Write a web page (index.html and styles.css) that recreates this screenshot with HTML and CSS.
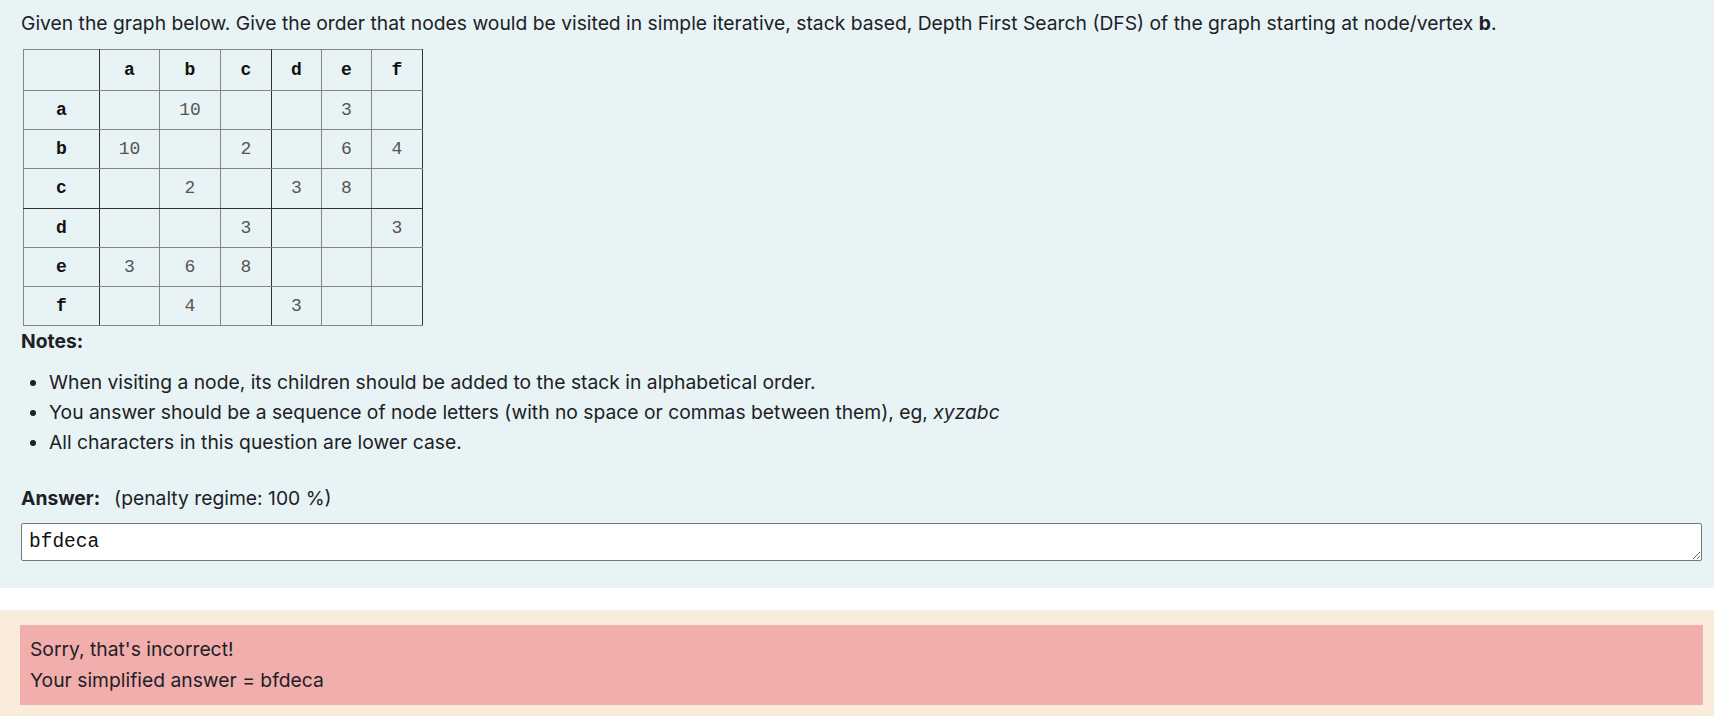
FILE: index.html
```html
<!DOCTYPE html>
<html lang="en">
<head>
    <meta charset="UTF-8">
    <title>DFS question</title>
    <link rel="stylesheet" href="styles.css">
</head>
<body>
    <div class="formulation">
        <p class="qtext">Given the graph below. Give the order that nodes would be visited in simple iterative, stack based, Depth First Search (DFS) of the graph starting at node/vertex <b>b</b>.</p>

        <table class="matrix">
            <colgroup>
                <col class="c-head">
                <col class="c-a">
                <col class="c-b">
                <col class="c-c">
                <col class="c-d">
                <col class="c-e">
                <col class="c-f">
            </colgroup>
            <tr class="top">
                <th class="sep"></th>
                <th>a</th><th>b</th><th class="sep">c</th><th>d</th><th>e</th><th class="sep">f</th>
            </tr>
            <tr>
                <th class="sep">a</th>
                <td></td><td>10</td><td class="sep"></td><td></td><td>3</td><td class="sep"></td>
            </tr>
            <tr>
                <th class="sep">b</th>
                <td>10</td><td></td><td class="sep">2</td><td></td><td>6</td><td class="sep">4</td>
            </tr>
            <tr class="block-end">
                <th class="sep">c</th>
                <td></td><td>2</td><td class="sep"></td><td>3</td><td>8</td><td class="sep"></td>
            </tr>
            <tr>
                <th class="sep">d</th>
                <td></td><td></td><td class="sep">3</td><td></td><td></td><td class="sep">3</td>
            </tr>
            <tr>
                <th class="sep">e</th>
                <td>3</td><td>6</td><td class="sep">8</td><td></td><td></td><td class="sep"></td>
            </tr>
            <tr>
                <th class="sep">f</th>
                <td></td><td>4</td><td class="sep"></td><td>3</td><td></td><td class="sep"></td>
            </tr>
        </table>

        <div class="notes-title">Notes:</div>
        <ul class="notes">
            <li>When visiting a node, its children should be added to the stack in alphabetical order.</li>
            <li>You answer should be a sequence of node letters (with no space or commas between them), eg, <i>xyzabc</i></li>
            <li>All characters in this question are lower case.</li>
        </ul>

        <div class="answer-label"><b>Answer:</b><span class="penalty">(penalty regime: 100 %)</span></div>
        <textarea class="answer" rows="1" spellcheck="false">bfdeca</textarea>
    </div>

    <div class="outcome">
        <div class="feedback">
            <div>Sorry, that's incorrect!</div>
            <div>Your simplified answer = bfdeca</div>
        </div>
    </div>
</body>
</html>
```

FILE: styles.css
```css
body {
    margin: 0;
    font-family: Inter, "Noto Sans", sans-serif;
    font-size: 19.3px;
    line-height: 30px;
    color: #1d2125;
    background-color: #fff;
}
.formulation {
    background-color: #e7f3f5;
    padding: 8px 12px 27px 21px;
}
.qtext {
    margin: 0 0 11px 0;
}
.matrix {
    border-collapse: collapse;
    table-layout: fixed;
    margin-left: 2px;
    font-family: "Liberation Mono", "Courier New", monospace;
    font-size: 18px;
}
.c-head { width: 76px; }
.c-a { width: 60px; }
.c-b { width: 61px; }
.c-c { width: 51px; }
.c-d { width: 50px; }
.c-e { width: 50px; }
.c-f { width: 51px; }
.matrix tr {
    height: 39.2px;
}
.matrix tr.top {
    height: 41px;
}
.matrix th,
.matrix td {
    border: 1px solid #858585;
    padding: 0;
    text-align: center;
    line-height: 20px;
}
.matrix th {
    font-weight: bold;
    color: #111;
}
.matrix td {
    color: #555;
}
.matrix .sep {
    border-right: 1px solid #333;
}
.matrix tr.block-end th,
.matrix tr.block-end td {
    border-bottom: 1px solid #333;
}
.notes-title {
    font-weight: bold;
}
.notes {
    margin: 11px 0 0 0;
    padding-left: 28px;
}
.answer-label {
    margin-top: 26px;
}
.penalty {
    margin-left: 14px;
}
.answer {
    display: block;
    box-sizing: border-box;
    width: 100%;
    height: 38px;
    margin-top: 10px;
    padding: 5px 7px;
    border: 1px solid #767676;
    border-radius: 2px;
    background-color: #fff;
    font-family: "Liberation Mono", "Courier New", monospace;
    font-size: 19.5px;
    line-height: 26px;
    color: #111;
}
.outcome {
    margin-top: 22px;
    background-color: #faecdc;
    padding: 15px 11px 16px 20px;
}
.feedback {
    background-color: #f2adad;
    padding: 9px 10px 9px 10px;
    line-height: 31px;
}
```
